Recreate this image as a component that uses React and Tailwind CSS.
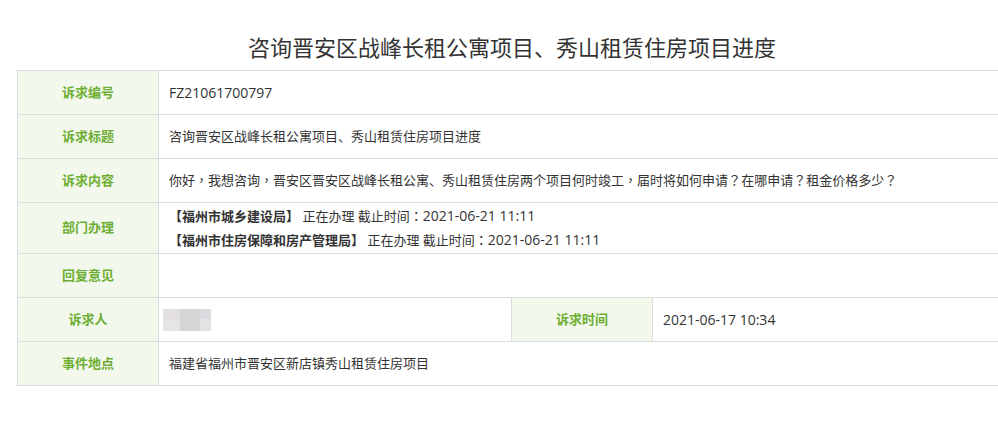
const zh = (text) =>
    text.split(/([，？：])/).map((part, i) =>
        /^[，？：]$/.test(part) ? (
            <span key={i} style={{ fontFamily: '"Noto Sans CJK TC", sans-serif' }}>
                {part}
            </span>
        ) : (
            part
        )
    );

const Num = ({ children }) => <span className="text-[14px]">{children}</span>;

const Label = ({ children }) => (
    <td className="bg-[#f2f9ec] border border-[#dddddd] text-center font-bold text-[#6fae34]">{children}</td>
);

const Value = ({ children, colSpan }) => (
    <td colSpan={colSpan} className="border border-[#dddddd] px-[10px] text-[#333333]">
        {children}
    </td>
);

export default function App() {
    return (
        <div
            className="w-[998px] h-[424px] overflow-hidden bg-white"
            style={{ fontFamily: '"Open Sans", "Noto Sans CJK SC", sans-serif' }}
        >
            <div className="ml-[17px] w-[990px]">
                <h1 className="pt-[30px] h-[70px] text-center text-[22px] leading-[34px] text-[#333333]">
                    咨询晋安区战峰长租公寓项目、秀山租赁住房项目进度
                </h1>
                <table className="w-full border-collapse text-[13px] table-fixed">
                    <colgroup>
                        <col className="w-[141px]" />
                        <col className="w-[353px]" />
                        <col className="w-[141px]" />
                        <col />
                    </colgroup>
                    <tbody>
                        <tr className="h-[44px]">
                            <Label>诉求编号</Label>
                            <Value colSpan={3}>
                                <Num>FZ21061700797</Num>
                            </Value>
                        </tr>
                        <tr className="h-[44px]">
                            <Label>诉求标题</Label>
                            <Value colSpan={3}>咨询晋安区战峰长租公寓项目、秀山租赁住房项目进度</Value>
                        </tr>
                        <tr className="h-[44px]">
                            <Label>诉求内容</Label>
                            <Value colSpan={3}>
                                {zh(
                                    '你好，我想咨询，晋安区晋安区战峰长租公寓、秀山租赁住房两个项目何时竣工，届时将如何申请？在哪申请？租金价格多少？'
                                )}
                            </Value>
                        </tr>
                        <tr className="h-[51px]">
                            <Label>部门办理</Label>
                            <Value colSpan={3}>
                                <div className="leading-[23px]">
                                    <span className="font-bold">【福州市城乡建设局】</span> 正在办理 截止时间
                                    {zh('：')}
                                    <Num>2021-06-21 11:11</Num>
                                </div>
                                <div className="leading-[23px]">
                                    <span className="font-bold">【福州市住房保障和房产管理局】</span> 正在办理 截止时间
                                    {zh('：')}
                                    <Num>2021-06-21 11:11</Num>
                                </div>
                            </Value>
                        </tr>
                        <tr className="h-[44px]">
                            <Label>回复意见</Label>
                            <Value colSpan={3}></Value>
                        </tr>
                        <tr className="h-[44px]">
                            <Label>诉求人</Label>
                            <td className="border border-[#dddddd] px-[4px]">
                                <div className="flex w-[48px] h-[22px]">
                                    <div className="w-[17px] flex flex-col">
                                        <div className="h-[10px] bg-[#e3dfe0]" />
                                        <div className="flex-1 bg-[#e6e4e6]" />
                                    </div>
                                    <div className="w-[20px] bg-[#d4d6d4]" />
                                    <div className="w-[11px] flex flex-col">
                                        <div className="h-[10px] bg-[#dcd9df]" />
                                        <div className="flex-1 bg-[#e3e3e6]" />
                                    </div>
                                </div>
                            </td>
                            <Label>诉求时间</Label>
                            <Value>
                                <Num>2021-06-17 10:34</Num>
                            </Value>
                        </tr>
                        <tr className="h-[44px]">
                            <Label>事件地点</Label>
                            <Value colSpan={3}>福建省福州市晋安区新店镇秀山租赁住房项目</Value>
                        </tr>
                    </tbody>
                </table>
            </div>
        </div>
    );
}
